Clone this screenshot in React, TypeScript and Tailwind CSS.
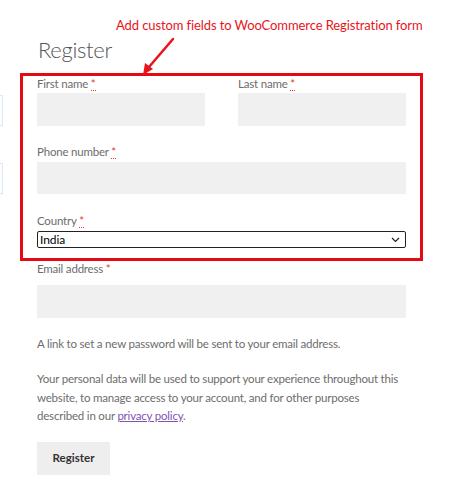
import React from "react";

function Req({ underline = true }: { underline?: boolean }) {
  return (
    <abbr
      className={
        underline
          ? "text-[#e2401c] no-underline border-b border-dotted border-[#e2401c] leading-none"
          : "text-[#e2401c] no-underline"
      }
      title="required"
    >
      *
    </abbr>
  );
}

function Label({ children }: { children: React.ReactNode }) {
  return (
    <div className="h-[16px] leading-[16px] text-[11.5px] tracking-[-0.2px] text-[#6d6d6d] whitespace-nowrap">
      {children}
    </div>
  );
}

export default function App() {
  return (
    <div className="relative w-[474px] h-[497px] bg-white overflow-hidden font-['Lato',sans-serif]">
      {/* left page fragments */}
      <div className="absolute left-[-10px] top-[95px] w-[13px] h-[31px] border border-[#dfe9f2] bg-[#fbfdff]" />
      <div className="absolute left-[-10px] top-[163px] w-[13px] h-[31px] border border-[#dfe9f2] bg-[#fbfdff]" />

      {/* arrow */}
      <svg className="absolute left-0 top-0" width="474" height="497" viewBox="0 0 474 497">
        <line x1="173" y1="39" x2="149" y2="67" stroke="#e8141b" strokeWidth="2.5" strokeLinecap="round" />
        <polygon points="143,75 145,63 153,69" fill="#e8141b" />
      </svg>

      <div className="pt-[16px]">
        <p className="ml-[116px] h-[18px] leading-[18px] text-[13px] text-[#e8141b] whitespace-nowrap tracking-[-0.1px]">
          Add custom fields to WooCommerce Registration form
        </p>
        <h2 className="ml-[38px] mt-0 h-[34px] leading-[32px] text-[22px] font-light text-[#555] tracking-[-0.3px]">
          Register
        </h2>

        <div className="ml-[20px] mt-[5px] w-[403px] border-[3px] border-[#e50914] px-[14px] pb-[10px]">
          <div className="flex gap-[33px]">
            <div className="w-[168px]">
              <Label>
                First name <Req />
              </Label>
              <div className="mt-[1px] h-[33px] bg-[#f0f0f0]" />
            </div>
            <div className="w-[168px]">
              <Label>
                Last name <Req />
              </Label>
              <div className="mt-[1px] h-[33px] bg-[#f0f0f0]" />
            </div>
          </div>

          <div className="mt-[18px]">
            <Label>
              Phone number <Req />
            </Label>
            <div className="mt-[2px] h-[32px] bg-[#f0f0f0]" />
          </div>

          <div className="mt-[19px]">
            <Label>
              Country <Req />
            </Label>
            <div className="mt-[2px] h-[17px] border border-[#222] rounded-[2px] bg-white flex items-center justify-between pl-[2px] pr-[5px]">
              <span className="text-[12px] leading-[15px] text-black tracking-[-0.1px]">India</span>
              <svg width="9" height="6" viewBox="0 0 9 6">
                <path d="M1 1 L4.5 4.5 L8 1" stroke="#222" strokeWidth="1.2" fill="none" />
              </svg>
            </div>
          </div>
        </div>

        <div className="ml-[37px] w-[369px]">
          <Label>
            Email address <Req underline={false} />
          </Label>
          <div className="mt-[8px] h-[33px] bg-[#f0f0f0]" />

          <p className="mt-[16px] text-[11.5px] tracking-[-0.2px] leading-[19px] text-[#6d6d6d] whitespace-nowrap">
            A link to set a new password will be sent to your email address.
          </p>
          <p className="mt-[17px] text-[11.5px] tracking-[-0.2px] leading-[18.5px] text-[#6d6d6d] w-[365px]">
            Your personal data will be used to support your experience throughout this website, to manage access to your account, and for other purposes described in our{" "}
            <a className="text-[#7f54b3] underline">privacy policy</a>.
          </p>

          <button className="mt-[16px] w-[73px] h-[33px] bg-[#eeeeee] text-[11.5px] font-bold text-[#333]">
            Register
          </button>
        </div>
      </div>
    </div>
  );
}
